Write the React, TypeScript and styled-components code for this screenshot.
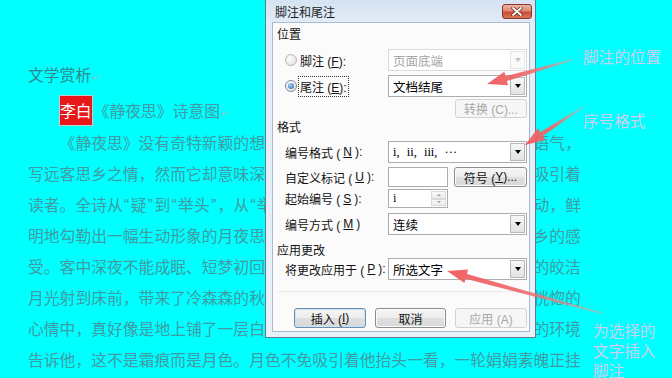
import React from "react";
import styled, { createGlobalStyle } from "styled-components";

const GlobalStyle = createGlobalStyle`
  html, body {
    margin: 0;
    padding: 0;
    background: #00ffff;
    overflow: hidden;
  }
`;

const Page = styled.div`
  position: relative;
  width: 672px;
  height: 378px;
  overflow: hidden;
  background: #00ffff;
  font-family: "Liberation Sans", "Noto Sans CJK SC", sans-serif;
`;

/* ---------- document behind the dialog ---------- */

const Doc = styled.div`
  padding: 59px 0 0 28px;
  font-family: "Noto Sans CJK SC", sans-serif;
  font-size: 15.8px;
  line-height: 31px;
  color: #3f9ca4;
  white-space: nowrap;
`;

const Title = styled.div`
  height: 31px;
  color: #2f878e;
  margin-bottom: 5px;
`;

const Heading = styled.div`
  height: 31px;
  padding-left: 31px;
  margin-bottom: 1px;
`;

const Highlight = styled.span`
  display: inline-block;
  height: 29px;
  line-height: 29px;
  background: #e8181a;
  color: #fff;
  border: 1px solid #c9c9c9;
  margin-right: 1px;
  vertical-align: top;
`;

const ParaMark = styled.span`
  font-size: 10px;
  line-height: 0;
  color: #88c9cd;
  margin-left: 1px;
`;

const Line = styled.div<{ $indent?: boolean }>`
  height: 31px;
  padding-left: ${(p) => (p.$indent ? "31.6px" : "0")};
`;

const Q = styled.span`
  display: inline-block;
  width: 0.5em;
  line-height: 20px;
  text-align: center;
  font-family: "Liberation Sans", sans-serif;
`;

/* ---------- dialog ---------- */

const Dialog = styled.div`
  position: absolute;
  z-index: 1;
  left: 265px;
  top: -1px;
  width: 271px;
  height: 339px;
  box-sizing: border-box;
  border: 1px solid #5f7894;
  background: linear-gradient(#d5e3f2, #e3ecf7 24px, #e9f0f8);
  padding: 0 5px 5px 6px;
  display: flex;
  flex-direction: column;
  font-family: "Liberation Sans", "Noto Sans CJK SC", sans-serif;
  font-size: 12px;
  color: #111;
`;

const TitleBar = styled.div`
  flex: 0 0 22px;
  display: flex;
  align-items: center;
  justify-content: space-between;
  padding-left: 3px;
  color: #1c1c1c;
`;

const CloseBtn = styled.div`
  width: 30px;
  height: 15px;
  margin-right: -2px;
  box-sizing: border-box;
  border: 1px solid #8a3525;
  border-radius: 3px;
  background: linear-gradient(#ecb3a6, #dd8a74 45%, #c94a31 55%, #d8765c);
  display: flex;
  align-items: center;
  justify-content: center;
`;

const Client = styled.div`
  flex: 1;
  border: 1px solid #a9bbd0;
  background: #fbfbfb;
  display: flex;
  flex-direction: column;
`;

const GroupTitle = styled.div<{ $mt: number }>`
  margin-top: ${(p) => p.$mt}px;
  height: 14px;
  line-height: 14px;
  padding-left: 4px;
`;

const Row = styled.div<{ $mt: number; $h: number }>`
  margin-top: ${(p) => p.$mt}px;
  height: ${(p) => p.$h}px;
  display: grid;
  grid-template-columns: 103px 139px;
  padding-left: 12px;
  align-items: center;
`;

const Label = styled.div`
  display: flex;
  align-items: center;
  gap: 3px;
  white-space: nowrap;
`;

const Focus = styled.span`
  outline: 1px dotted #333;
  outline-offset: 1px;
`;

const Acc = styled.span`
  text-decoration: underline;
`;

const Radio = styled.span<{ $checked?: boolean }>`
  width: 12px;
  height: 12px;
  box-sizing: border-box;
  border-radius: 50%;
  border: 1px solid ${(p) => (p.$checked ? "#7d8a98" : "#b9b9b9")};
  background: radial-gradient(circle at 40% 35%, #ffffff, #dcdcdc);
  display: flex;
  align-items: center;
  justify-content: center;

  &::after {
    content: "";
    display: ${(p) => (p.$checked ? "block" : "none")};
    width: 6px;
    height: 6px;
    border-radius: 50%;
    background: radial-gradient(circle at 40% 35%, #a9d0f2, #2c5f9e);
  }
`;

const Select = styled.div<{ $disabled?: boolean }>`
  height: 100%;
  box-sizing: border-box;
  display: flex;
  align-items: stretch;
  border: 1px solid ${(p) => (p.$disabled ? "#dadada" : "#abadb3")};
  background: #fff;
  color: ${(p) => (p.$disabled ? "#a5a5a5" : "#000")};
`;

const Value = styled.span<{ $serif?: boolean }>`
  flex: 1;
  display: flex;
  align-items: center;
  padding-left: 4px;
  font-size: 12.5px;
  font-family: ${(p) =>
    p.$serif ? '"Liberation Serif", serif' : '"Liberation Sans", "Noto Sans CJK SC", sans-serif'};
  word-spacing: ${(p) => (p.$serif ? "4px" : "0")};
`;

const ArrowBox = styled.span<{ $disabled?: boolean }>`
  width: 13px;
  margin: 1px;
  display: flex;
  align-items: center;
  justify-content: center;
  border: 1px solid ${(p) => (p.$disabled ? "#e4e4e4" : "#b9b9b9")};
  background: ${(p) => (p.$disabled ? "#fafafa" : "linear-gradient(#f7f7f7, #e2e2e2)")};
`;

const Caret = styled.span<{ $color: string; $up?: boolean; $size?: number }>`
  width: 0;
  height: 0;
  border-left: ${(p) => p.$size ?? 3.5}px solid transparent;
  border-right: ${(p) => p.$size ?? 3.5}px solid transparent;
  ${(p) => (p.$up ? "border-bottom" : "border-top")}: ${(p) => (p.$size ? p.$size - 0.5 : 4)}px solid
    ${(p) => p.$color};
`;

const Btn = styled.button<{ $w: number; $default?: boolean }>`
  width: ${(p) => p.$w}px;
  height: 100%;
  box-sizing: border-box;
  padding: 0;
  border: 1px solid ${(p) => (p.$default ? "#6e8fae" : "#8b8d8f")};
  border-radius: 3px;
  background: linear-gradient(#f6f6f6, #ededed 48%, #dfdfdf 52%, #d8d8d8);
  box-shadow: inset 0 0 0 1px ${(p) => (p.$default ? "#c6e3f5" : "#fbfbfb")};
  font: inherit;
  color: #111;
  display: flex;
  align-items: center;
  justify-content: center;

  &:disabled {
    border-color: #d2d2d2;
    background: #f6f6f6;
    box-shadow: none;
    color: #a8a8a8;
  }
`;

const PairCell = styled.div`
  height: 100%;
  display: flex;
  justify-content: space-between;
`;

const TextBox = styled.div`
  width: 60px;
  height: 100%;
  box-sizing: border-box;
  border: 1px solid #abadb3;
  background: #fff;
  display: flex;
`;

const SpinArrows = styled.span`
  width: 15px;
  margin: 1px;
  display: flex;
  flex-direction: column;
`;

const SpinBtn = styled.span`
  flex: 1;
  border: 1px solid #dadada;
  background: linear-gradient(#f8f8f8, #ececec);
  display: flex;
  align-items: center;
  justify-content: center;
`;

const Separator = styled.div`
  margin: 11px 2px 0 4px;
  height: 1px;
  background: #e8e8e8;
`;

const ButtonRow = styled.div`
  margin-top: 16px;
  height: 20px;
  display: flex;
  justify-content: flex-end;
  gap: 9px;
  padding-right: 2px;
`;

const RightCell = styled.div`
  grid-column: 2;
  height: 100%;
  display: flex;
  justify-content: flex-end;
`;

/* ---------- annotations ---------- */

const Overlay = styled.svg`
  position: absolute;
  z-index: 2;
  left: 0;
  top: 0;
  pointer-events: none;
`;

const Note = styled.div<{ $x: number; $y: number }>`
  position: absolute;
  z-index: 2;
  left: ${(p) => p.$x}px;
  top: ${(p) => p.$y}px;
  font-size: 15.6px;
  line-height: 20px;
  color: #ccd0ef;
  font-family: "Noto Sans CJK SC", sans-serif;
  white-space: nowrap;
`;

type Pt = [number, number];

function arrowPoints(tail: Pt, tip: Pt, w0 = 1.5, w1 = 5, headLen = 20, headHalf = 7) {
  const dx = tip[0] - tail[0];
  const dy = tip[1] - tail[1];
  const len = Math.hypot(dx, dy);
  const ux = dx / len;
  const uy = dy / len;
  const nx = -uy;
  const ny = ux;
  const bx = tip[0] - ux * headLen;
  const by = tip[1] - uy * headLen;
  const p = (x: number, y: number) => `${x.toFixed(1)},${y.toFixed(1)}`;
  return [
    p(tail[0] + (nx * w0) / 2, tail[1] + (ny * w0) / 2),
    p(bx + (nx * w1) / 2, by + (ny * w1) / 2),
    p(bx + nx * headHalf, by + ny * headHalf),
    p(tip[0], tip[1]),
    p(bx - nx * headHalf, by - ny * headHalf),
    p(bx - (nx * w1) / 2, by - (ny * w1) / 2),
    p(tail[0] - (nx * w0) / 2, tail[1] - (ny * w0) / 2),
  ].join(" ");
}

const arrows: { id: string; tail: Pt; tip: Pt }[] = [
  { id: "a1", tail: [572, 60], tip: [487, 84] },
  { id: "a2", tail: [583, 107], tip: [525, 145] },
  { id: "a3", tail: [601, 313], tip: [447, 271] },
];

function Arrows() {
  return (
    <Overlay width={672} height={378} viewBox="0 0 672 378">
      <defs>
        {arrows.map((a) => (
          <linearGradient
            key={a.id}
            id={a.id}
            gradientUnits="userSpaceOnUse"
            x1={a.tail[0]}
            y1={a.tail[1]}
            x2={a.tip[0]}
            y2={a.tip[1]}
          >
            <stop offset="0" stopColor="#f29a9a" stopOpacity="0.55" />
            <stop offset="0.5" stopColor="#ef6a6a" stopOpacity="0.9" />
            <stop offset="1" stopColor="#ee5a5c" stopOpacity="0.95" />
          </linearGradient>
        ))}
      </defs>
      {arrows.map((a) => (
        <polygon key={a.id} points={arrowPoints(a.tail, a.tip)} fill={`url(#${a.id})`} />
      ))}
    </Overlay>
  );
}

function DropDown({ value, disabled, serif }: { value: string; disabled?: boolean; serif?: boolean }) {
  return (
    <Select $disabled={disabled}>
      <Value $serif={serif}>{value}</Value>
      <ArrowBox $disabled={disabled}>
        <Caret $color={disabled ? "#c4c4c4" : "#000"} />
      </ArrowBox>
    </Select>
  );
}

function FootnoteDialog() {
  return (
    <Dialog>
      <TitleBar>
        <span>脚注和尾注</span>
        <CloseBtn>
          <svg width="12" height="9" viewBox="0 0 12 9">
            <path d="M2 1 L10 8 M10 1 L2 8" stroke="#6b2a1e" strokeWidth="3.4" strokeLinecap="round" />
            <path d="M2 1 L10 8 M10 1 L2 8" stroke="#ffffff" strokeWidth="1.8" strokeLinecap="round" />
          </svg>
        </CloseBtn>
      </TitleBar>
      <Client>
        <GroupTitle $mt={5}>位置</GroupTitle>
        <Row $mt={7} $h={22}>
          <Label>
            <Radio />
            <span>
              脚注 (<Acc>F</Acc>):
            </span>
          </Label>
          <DropDown value="页面底端" disabled />
        </Row>
        <Row $mt={4} $h={22}>
          <Label>
            <Radio $checked />
            <Focus>
              尾注 (<Acc>E</Acc>):
            </Focus>
          </Label>
          <DropDown value="文档结尾" />
        </Row>
        <Row $mt={2} $h={19}>
          <RightCell>
            <Btn $w={72} disabled>
              转换 (C)...
            </Btn>
          </RightCell>
        </Row>

        <GroupTitle $mt={3}>格式</GroupTitle>
        <Row $mt={6} $h={22}>
          <Label>
            编号格式 (<Acc>N</Acc>):
          </Label>
          <DropDown value="i, ii, iii, ···" serif />
        </Row>
        <Row $mt={4} $h={20}>
          <Label>
            自定义标记 (<Acc>U</Acc>):
          </Label>
          <PairCell>
            <TextBox />
            <Btn $w={73}>
              符号 (<Acc>Y</Acc>)...
            </Btn>
          </PairCell>
        </Row>
        <Row $mt={2} $h={19}>
          <Label>
            起始编号 (<Acc>S</Acc>):
          </Label>
          <TextBox>
            <Value $serif>i</Value>
            <SpinArrows>
              <SpinBtn>
                <Caret $color="#9c9c9c" $up $size={2.5} />
              </SpinBtn>
              <SpinBtn>
                <Caret $color="#9c9c9c" $size={2.5} />
              </SpinBtn>
            </SpinArrows>
          </TextBox>
        </Row>
        <Row $mt={5} $h={22}>
          <Label>
            编号方式 (<Acc>M</Acc>)
          </Label>
          <DropDown value="连续" />
        </Row>

        <GroupTitle $mt={9}>应用更改</GroupTitle>
        <Row $mt={0} $h={22}>
          <Label>
            将更改应用于 (<Acc>P</Acc>):
          </Label>
          <DropDown value="所选文字" />
        </Row>
        <Separator />
        <ButtonRow>
          <Btn $w={72} $default>
            插入 (<Acc>I</Acc>)
          </Btn>
          <Btn $w={71}>取消</Btn>
          <Btn $w={72} disabled>
            应用 (A)
          </Btn>
        </ButtonRow>
      </Client>
    </Dialog>
  );
}

export default function App() {
  return (
    <Page>
      <GlobalStyle />
      <Doc>
        <Title>
          文学赏析<ParaMark>↵</ParaMark>
        </Title>
        <Heading>
          <Highlight>李白</Highlight>《静夜思》诗意图<ParaMark>↵</ParaMark>
        </Heading>
        <Line $indent>《静夜思》没有奇特新颖的想象，没有精工华美的辞藻；只用叙述的语气，</Line>
        <Line>写远客思乡之情，然而它却意味深长，耐人寻味，千百年来，如此广泛地吸引着</Line>
        <Line>
          读者。全诗从<Q>“</Q>疑<Q>”</Q>到<Q>“</Q>举头<Q>”</Q>，从<Q>“</Q>举头<Q>”</Q>到<Q>“</Q>低头
          <Q>”</Q>，形象地揭示诗人内心活动，鲜
        </Line>
        <Line>明地勾勒出一幅生动形象的月夜思乡图，抒发了作者在寂静的月夜思念家乡的感</Line>
        <Line>受。客中深夜不能成眠、短梦初回的情况下，那洒落在窗前地上一片晶莹的皎洁</Line>
        <Line>月光射到床前，带来了冷森森的秋宵寒意。诗人朦胧地乍一望去，在迷离恍惚的</Line>
        <Line>心情中，真好像是地上铺了一层白皑皑的浓霜；可是再定神一看，四周围的环境</Line>
        <Line>告诉他，这不是霜痕而是月色。月色不免吸引着他抬头一看，一轮娟娟素魄正挂</Line>
      </Doc>
      <FootnoteDialog />
      <Note $x={583} $y={46}>脚注的位置</Note>
      <Note $x={583} $y={110}>序号格式</Note>
      <Note $x={593} $y={320}>
        为选择的
        <br />
        文字插入
        <br />
        脚注
      </Note>
      <Arrows />
    </Page>
  );
}
